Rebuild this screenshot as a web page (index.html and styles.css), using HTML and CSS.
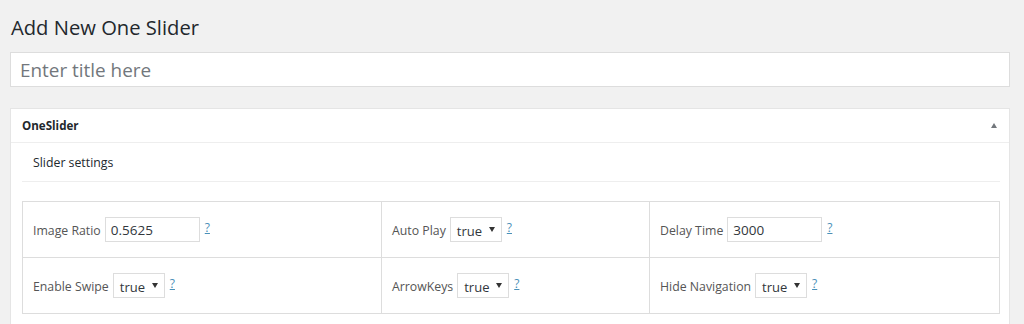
FILE: index.html
```html
<!DOCTYPE html>
<html>
<head>
<meta charset="utf-8">
<link rel="stylesheet" href="styles.css">
</head>
<body>
<div class="wrap">
  <h1 class="page-title">Add New One Slider</h1>
  <div class="title-box"><span class="placeholder">Enter title here</span></div>
  <div class="postbox">
    <div class="postbox-header">
      <span class="postbox-title">OneSlider</span>
      <span class="toggle"></span>
    </div>
    <div class="inside">
      <div class="section-title">Slider settings</div>
      <table class="settings">
        <tr>
          <td class="c1"><div class="field"><span class="label">Image Ratio</span><span class="text-input w95">0.5625</span><a class="help">?</a></div></td>
          <td class="c2"><div class="field"><span class="label">Auto Play</span><span class="select">true<i class="arrow"></i></span><a class="help">?</a></div></td>
          <td class="c3"><div class="field"><span class="label">Delay Time</span><span class="text-input w95">3000</span><a class="help">?</a></div></td>
        </tr>
        <tr>
          <td class="c1"><div class="field"><span class="label">Enable Swipe</span><span class="select">true<i class="arrow"></i></span><a class="help">?</a></div></td>
          <td class="c2"><div class="field"><span class="label">ArrowKeys</span><span class="select">true<i class="arrow"></i></span><a class="help">?</a></div></td>
          <td class="c3"><div class="field"><span class="label">Hide Navigation</span><span class="select">true<i class="arrow"></i></span><a class="help">?</a></div></td>
        </tr>
      </table>
    </div>
  </div>
</div>
</body>
</html>
```
FILE: styles.css
```css
* { box-sizing: border-box; }
html, body { margin: 0; padding: 0; }
body {
  background: #f1f1f1;
  font-family: "Open Sans", "Noto Sans", sans-serif;
  color: #444;
  width: 1024px;
  height: 324px;
  overflow: hidden;
}
.wrap {
  padding: 0 14px 0 10px;
}
.page-title {
  margin: 0;
  padding: 14px 0 0 1px;
  height: 52px;
  font-size: 20.2px;
  font-weight: 400;
  line-height: 26px;
  color: #23282d;
}
.title-box {
  height: 35px;
  background: #fff;
  border: 1px solid #ddd;
  display: flex;
  align-items: center;
  padding-left: 9px;
}
.placeholder {
  font-size: 18.9px;
  color: #72777c;
}
.postbox {
  margin-top: 21px;
  background: #fff;
  border: 1px solid #e5e5e5;
  border-bottom: 0;
  height: 216px;
}
.postbox-header {
  height: 34px;
  display: flex;
  align-items: center;
  justify-content: space-between;
  padding: 0 12px 0 11px;
  border-bottom: 1px solid #eee;
}
.postbox-title {
  font-size: 11.6px;
  font-weight: 700;
  color: #23282d;
}
.toggle {
  width: 0;
  height: 0;
  border-left: 3.5px solid transparent;
  border-right: 3.5px solid transparent;
  border-bottom: 5px solid #72777c;
}
.inside {
  padding: 0 9px 0 11px;
}
.section-title {
  height: 39px;
  display: flex;
  align-items: center;
  padding-left: 11px;
  font-size: 12.3px;
  color: #23282d;
  border-bottom: 1px solid #eee;
}
.settings {
  margin-top: 19px;
  border-collapse: collapse;
  table-layout: fixed;
  width: 977px;
}
.settings td {
  border: 1px solid #ddd;
  height: 56px;
  padding: 0 10px;
  vertical-align: middle;
}
.c1 { width: 359px; }
.c2 { width: 268px; }
.c3 { width: 350px; }
.field {
  display: flex;
  align-items: center;
  font-size: 12.3px;
  color: #555;
}
.label {
  margin-right: 4px;
  padding-top: 2px;
}
.text-input {
  height: 25px;
  border: 1px solid #ddd;
  display: flex;
  align-items: center;
  padding-left: 5px;
  color: #32373c;
  font-size: 13.5px;
}
.w95 { width: 95px; }
.select {
  height: 25px;
  width: 52px;
  border: 1px solid #ddd;
  display: flex;
  align-items: center;
  padding: 3px 0 0 6px;
  color: #32373c;
  font-size: 13px;
  position: relative;
}
.arrow {
  position: absolute;
  right: 6px;
  top: 9px;
  width: 0;
  height: 0;
  border-left: 3px solid transparent;
  border-right: 3px solid transparent;
  border-top: 5px solid #333;
}
.help {
  margin-left: 5px;
  color: #4a90b8;
  text-decoration: underline;
  font-size: 12px;
  margin-top: -5px;
}
```
